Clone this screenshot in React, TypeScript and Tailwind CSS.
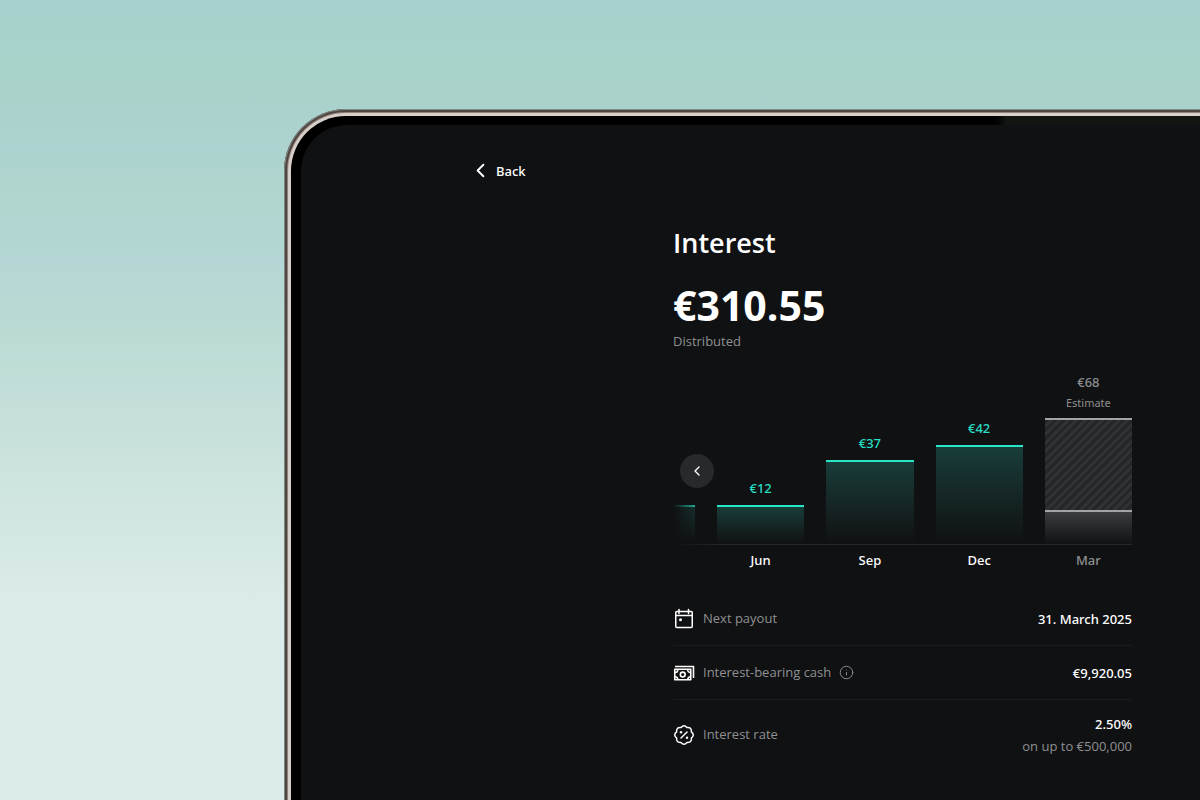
import React from 'react';
import { ChevronLeft, Info } from 'lucide-react';

interface Payout {
  month: string;
  amount: string;
  height: number;
}

interface DetailRowProps {
  icon: React.ReactNode;
  label: string;
  value: string;
  note?: string;
  hasInfo?: boolean;
}

const payouts: Payout[] = [
  { month: 'Jun', amount: '€12', height: 39 },
  { month: 'Sep', amount: '€37', height: 84 },
  { month: 'Dec', amount: '€42', height: 99 },
];

const CalendarIcon = () => (
  <svg width="22" height="22" viewBox="0 0 22 22" fill="none" stroke="currentColor" strokeWidth="1.5" strokeLinecap="round" strokeLinejoin="round">
    <rect x="2.75" y="3.5" width="16.5" height="16" rx="1" />
    <path d="M2.75 7.5h16.5M6 1.5v4M15.5 1.5v4" />
    <circle cx="7.5" cy="11.75" r="1.5" fill="currentColor" stroke="none" />
  </svg>
);

const CashIcon = () => (
  <svg width="22" height="22" viewBox="0 0 22 22" fill="none" stroke="currentColor" strokeWidth="1.6" strokeLinejoin="round">
    <path d="M2 4.5h18.5V16" />
    <rect x="1.75" y="7.25" width="16" height="10.5" />
    <circle cx="9.75" cy="12.5" r="2.4" />
    <path d="M2 10.5c1.6 0 2.8-1.1 2.8-2.8M17.5 10.5c-1.6 0-2.8-1.1-2.8-2.8M2 14.8c1.6 0 2.8 1.1 2.8 2.8M17.5 14.8c-1.6 0-2.8 1.1-2.8 2.8" />
  </svg>
);

const RateIcon = () => (
  <svg width="22" height="22" viewBox="0 0 22 22" fill="none" stroke="currentColor" strokeWidth="1.5" strokeLinecap="round" strokeLinejoin="round">
    <path d="M7.94 3.61Q11 -.2 14.06 3.61Q18.92 3.08 18.39 7.94Q22.2 11 18.39 14.06Q18.92 18.92 14.06 18.39Q11 22.2 7.94 18.39Q3.08 18.92 3.61 14.06Q-.2 11 3.61 7.94Q3.08 3.08 7.94 3.61Z" />
    <path d="M8 14l6-6" />
    <circle cx="8" cy="8.25" r="1.2" fill="currentColor" stroke="none" />
    <circle cx="14" cy="13.75" r="1.2" fill="currentColor" stroke="none" />
  </svg>
);

const DetailRow: React.FC<DetailRowProps> = ({ icon, label, value, note, hasInfo }) => (
  <div className="flex min-h-[54px] items-center justify-between border-b border-[#1b1c1e] last:border-b-0 last:py-[13px]">
    <dt className="flex items-center gap-2 text-[#8f9091]">
      <span className="flex w-[22px] justify-center text-white">{icon}</span>
      {label}
      {hasInfo && (
        <button type="button" aria-label="About interest-bearing cash">
          <Info size={15} strokeWidth={1.5} />
        </button>
      )}
    </dt>
    <dd className="text-right leading-[22px]">
      <p className="font-['Noto_Sans',sans-serif] font-medium text-white">{value}</p>
      {note && <p className="text-[#8f9091]">{note}</p>}
    </dd>
  </div>
);

const PayoutChart = () => (
  <div className="relative font-['Noto_Sans',sans-serif]">
    <div className="grid h-[173px] grid-cols-[22px_repeat(4,minmax(0,1fr))] items-end gap-x-[22px]">
      {/* Earlier quarter, fading out at the scroll edge */}
      <div className="h-[39px] border-t-2 border-[#28e5c8] bg-linear-to-b from-[#173d3a] to-[#101113] mask-l-from-0% opacity-70" />
      {payouts.map((payout) => (
        <div key={payout.month} className="text-center">
          <p className="mb-[7px] leading-5 font-medium text-[#27dfc3]">{payout.amount}</p>
          <div
            className="border-t-2 border-[#28e5c8] bg-linear-to-b from-[#173d3a] to-[#101113]"
            style={{ height: payout.height }}
          />
        </div>
      ))}
      <div className="text-center text-[#8f9091]">
        <p className="leading-5 font-medium">€68</p>
        <p className="mb-1 text-[11px] leading-[22px]">Estimate</p>
        <div className="flex h-[126px] flex-col border-t-2 border-[#a4a4a5] bg-[repeating-linear-gradient(135deg,#252628_0px,#252628_3px,#313234_3px,#313234_6px)]">
          <div className="mt-auto h-[34px] border-t-2 border-[#a4a4a5] bg-linear-to-b from-[#3c3d3f] to-[#111214]" />
        </div>
      </div>
    </div>
    <div className="h-px bg-linear-to-r from-transparent via-[#252628] via-10% to-[#252628]" />
    <div className="mt-[5px] grid grid-cols-[22px_repeat(4,minmax(0,1fr))] gap-x-[22px] text-center leading-5 font-medium text-white">
      <span />
      {payouts.map((payout) => (
        <span key={payout.month}>{payout.month}</span>
      ))}
      <span className="text-[#8f9091]">Mar</span>
    </div>
    <button
      type="button"
      aria-label="Earlier payouts"
      className="absolute top-[83px] left-[7px] flex size-[34px] items-center justify-center rounded-full bg-[#28292b] text-white"
    >
      <ChevronLeft size={16} strokeWidth={2} />
    </button>
  </div>
);

const App = () => (
  <div className="flex min-h-screen flex-col overflow-hidden bg-[linear-gradient(#a7d0cd_0%,#a9d2ca_10%,#add3d0_19%,#b0d5ce_24%,#b4d7d5_33%,#badbd4_41%,#c4deda_50%,#d0e5e0_63%,#dbebe9_75%,#dcecea_100%)] pt-[109px] pl-[284px] font-['Open_Sans',sans-serif] text-[13px]">
    {/* Tablet frame, bled past the right and bottom edges */}
    <div className="-mr-5 -mb-5 flex flex-1 flex-col rounded-tl-[62px] bg-[#d9cfc9] pt-[7px] pl-[7px] shadow-[inset_0_0_0_1px_#7d8a86,inset_0_0_0_3px_#4f4541,inset_0_0_0_4px_#8f837d]">
      <div className="flex flex-1 flex-col rounded-tl-[55px] bg-linear-to-r from-black from-75% to-[#121613] to-77% pt-[9px] pl-[10px]">
        <main className="flex-1 rounded-tl-[46px] bg-[#101113] pt-[34px] pr-[88px] pb-5">
          <button type="button" className="ml-[168px] flex items-center gap-1 font-['Noto_Sans',sans-serif] leading-5 font-medium text-white">
            <ChevronLeft size={23} strokeWidth={2} />
            Back
          </button>
          <section className="mt-[43px] ml-[372px]">
            <h1 className="text-[27px] leading-9 font-semibold text-white">Interest</h1>
            <p className="mt-5 text-[41px] leading-[48px] font-bold text-white">€310.55</p>
            <p className="mt-[2px] mb-5 leading-5 text-[#8f9091]">Distributed</p>
            <PayoutChart />
            <dl className="mt-[22px]">
              <DetailRow icon={<CalendarIcon />} label="Next payout" value="31. March 2025" />
              <DetailRow icon={<CashIcon />} label="Interest-bearing cash" value="€9,920.05" hasInfo />
              <DetailRow icon={<RateIcon />} label="Interest rate" value="2.50%" note="on up to €500,000" />
            </dl>
          </section>
        </main>
      </div>
    </div>
  </div>
);

export default App;
